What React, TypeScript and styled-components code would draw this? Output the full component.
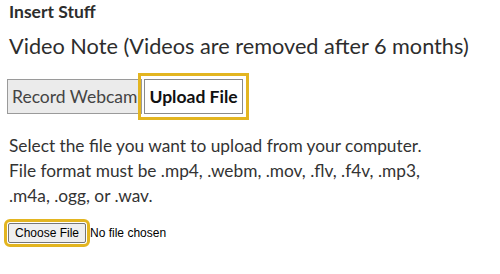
import styled, { createGlobalStyle } from 'styled-components';

const GlobalStyle = createGlobalStyle`
  body {
    margin: 0;
    background: #fff;
    font-family: Lato, "Liberation Sans", sans-serif;
    color: #333;
  }
`;

const Panel = styled.div`
  padding: 1px 9px 0 9px;
  width: 500px;
  height: 274px;
  box-sizing: border-box;
`;

const Heading = styled.div`
  font-weight: 700;
  font-size: 17.5px;
  line-height: 22px;
  color: #2d2d2d;
`;

const Title = styled.div`
  margin-top: 9px;
  font-size: 21.7px;
  line-height: 28px;
  color: #2d2d2d;
  white-space: nowrap;
`;

const Tabs = styled.div`
  display: flex;
  gap: 2px;
  margin-top: 19px;
  margin-left: -2px;
`;

const Tab = styled.button<{ $active?: boolean }>`
  height: 35px;
  padding: 0 4px;
  font-family: Lato, "Liberation Sans", sans-serif;
  font-size: 17.5px;
  font-weight: ${(p) => (p.$active ? 700 : 400)};
  color: ${(p) => (p.$active ? '#111' : '#444')};
  background: ${(p) => (p.$active ? '#fff' : '#ebebeb')};
  border: 1px solid ${(p) => (p.$active ? '#8a8a8a' : '#9a9a9a')};
  border-radius: 0;
  outline: ${(p) => (p.$active ? '3px solid #e3b520' : 'none')};
  outline-offset: 3px;
  position: relative;
  z-index: ${(p) => (p.$active ? 1 : 0)};
`;

const Help = styled.p`
  margin: 19px 0 0 0;
  font-size: 17.3px;
  line-height: 25px;
  color: #333;
  white-space: nowrap;
`;

const FileRow = styled.div`
  margin-top: 15px;
  margin-left: -1px;
  display: flex;
  align-items: center;
  font-family: "Liberation Sans", Arial, sans-serif;
  font-size: 12px;
  color: #000;
`;

const ChooseButton = styled.button`
  height: 20px;
  padding: 0 6px;
  font-family: "Liberation Sans", Arial, sans-serif;
  font-size: 12px;
  color: #000;
  background: #efefef;
  border: 1px solid #767676;
  border-radius: 2px;
  outline: 3px solid #e3b520;
  outline-offset: 1px;
  margin-right: 4px;
`;

const FileName = styled.span``;

export default function App() {
  return (
    <>
      <GlobalStyle />
      <Panel>
        <Heading>Insert Stuff</Heading>
        <Title>Video Note (Videos are removed after 6 months)</Title>
        <Tabs>
          <Tab>Record Webcam</Tab>
          <Tab $active>Upload File</Tab>
        </Tabs>
        <Help>
          Select the file you want to upload from your computer.
          <br />
          File format must be .mp4, .webm, .mov, .flv, .f4v, .mp3,
          <br />
          .m4a, .ogg, or .wav.
        </Help>
        <FileRow>
          <ChooseButton type="button">Choose File</ChooseButton>
          <FileName>No file chosen</FileName>
        </FileRow>
      </Panel>
    </>
  );
}
